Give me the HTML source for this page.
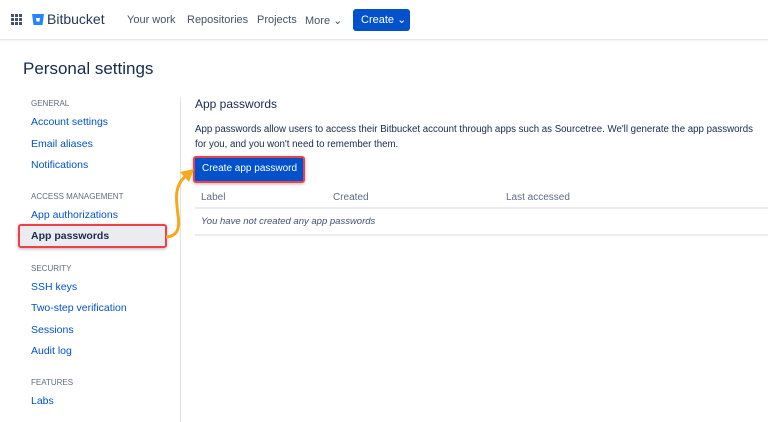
<!DOCTYPE html>
<html><head><meta charset="utf-8"><style>
*{margin:0;padding:0;box-sizing:border-box}
body{width:768px;height:422px;overflow:hidden;background:#fff;font-family:"Liberation Sans",sans-serif;position:relative;color:#172b4d}
.a{position:absolute;white-space:nowrap}
.nav{font-size:11px;color:#42526e;top:14px}
.sec{font-size:8px;color:#5e6c84;left:31px}
.lk{font-size:10.5px;color:#0052cc;left:31px}
.dot{position:absolute;width:3px;height:3px;background:#42526e}
</style></head><body>
<div class="a" style="left:0;top:0;width:768px;height:40px;border-bottom:1px solid #e6e8eb;box-shadow:0 1px 2px rgba(0,0,0,.06)"></div>
<div style="position:absolute;left:11px;top:14px;width:11px;height:11px">
<div class="dot" style="left:0;top:0"></div><div class="dot" style="left:4px;top:0"></div><div class="dot" style="left:8px;top:0"></div>
<div class="dot" style="left:0;top:4px"></div><div class="dot" style="left:4px;top:4px"></div><div class="dot" style="left:8px;top:4px"></div>
<div class="dot" style="left:0;top:8px"></div><div class="dot" style="left:4px;top:8px"></div><div class="dot" style="left:8px;top:8px"></div>
</div>
<svg class="a" style="left:32px;top:14px" width="12" height="12" viewBox="0 0 12 12"><path d="M0 0H12L10.5 11H1.5Z" fill="#2684ff"/><path d="M4 4H8L7.5 7.5H4.5Z" fill="#fff"/></svg>
<div class="a" style="left:47px;top:11px;font-size:14px;color:#253858">Bitbucket</div>
<div class="a nav" style="left:127px">Your work</div>
<div class="a nav" style="left:187px">Repositories</div>
<div class="a nav" style="left:257px">Projects</div>
<div class="a nav" style="left:305px">More ⌄</div>
<div class="a" style="left:353px;top:9px;width:57px;height:22px;background:#0052cc;border-radius:3px;color:#fff;font-size:11px;line-height:22px;padding-left:8px">Create ⌄</div>

<div class="a" style="left:23px;top:59px;font-size:17px;color:#172b4d">Personal settings</div>
<div class="a" style="left:180px;top:97px;width:1px;height:325px;background:#dfe1e6"></div>

<div class="a sec" style="top:99px">GENERAL</div>
<div class="a lk" style="top:116px">Account settings</div>
<div class="a lk" style="top:138px">Email aliases</div>
<div class="a lk" style="top:159px">Notifications</div>
<div class="a sec" style="top:192px">ACCESS MANAGEMENT</div>
<div class="a lk" style="top:209px">App authorizations</div>
<div class="a" style="left:18px;top:224px;width:149px;height:24px;background:#ebecf0;border:2px solid #ee3f4b;border-radius:3px;box-shadow:0 1px 3px rgba(0,0,0,.3)"></div>
<div class="a" style="left:31px;top:230px;font-size:10.5px;color:#172b4d;font-weight:bold">App passwords</div>
<div class="a sec" style="top:264px">SECURITY</div>
<div class="a lk" style="top:281px">SSH keys</div>
<div class="a lk" style="top:302px">Two-step verification</div>
<div class="a lk" style="top:324px">Sessions</div>
<div class="a lk" style="top:345px">Audit log</div>
<div class="a sec" style="top:378px">FEATURES</div>
<div class="a lk" style="top:395px">Labs</div>

<div class="a" style="left:195px;top:97px;font-size:12px;color:#172b4d">App passwords</div>
<div class="a" style="left:195px;top:122px;font-size:9.7px;color:#172b4d;line-height:15px">App passwords allow users to access their Bitbucket account through apps such as Sourcetree. We'll generate the app passwords<br>for you, and you won't need to remember them.</div>
<div class="a" style="left:193px;top:156px;width:112px;height:27px;border:2px solid #ee3f4b;border-radius:3px;box-shadow:0 1px 3px rgba(0,0,0,.3);background:#0052cc"></div>
<div class="a" style="left:202px;top:163px;font-size:10px;color:#fff">Create app password</div>
<div class="a" style="left:201px;top:192px;font-size:10px;color:#5e6c84">Label</div>
<div class="a" style="left:333px;top:192px;font-size:10px;color:#5e6c84">Created</div>
<div class="a" style="left:506px;top:192px;font-size:10px;color:#5e6c84">Last accessed</div>
<div class="a" style="left:195px;top:207px;width:573px;height:2px;background:#ebecf0"></div>
<div class="a" style="left:201px;top:216px;font-size:9.5px;font-style:italic;color:#42526e">You have not created any app passwords</div>
<div class="a" style="left:195px;top:234px;width:573px;height:2px;background:#ebecf0"></div>

<svg class="a" style="left:160px;top:160px" width="40" height="85" viewBox="0 0 40 85">
<path d="M6 77 C18 76 20 68 18 55 C16 40 14 25 26 16" fill="none" stroke="#f6a91b" stroke-width="3"/>
<path d="M20 12 L34 9 L29 22 Z" fill="#f6a91b"/>
</svg>
</body></html>
